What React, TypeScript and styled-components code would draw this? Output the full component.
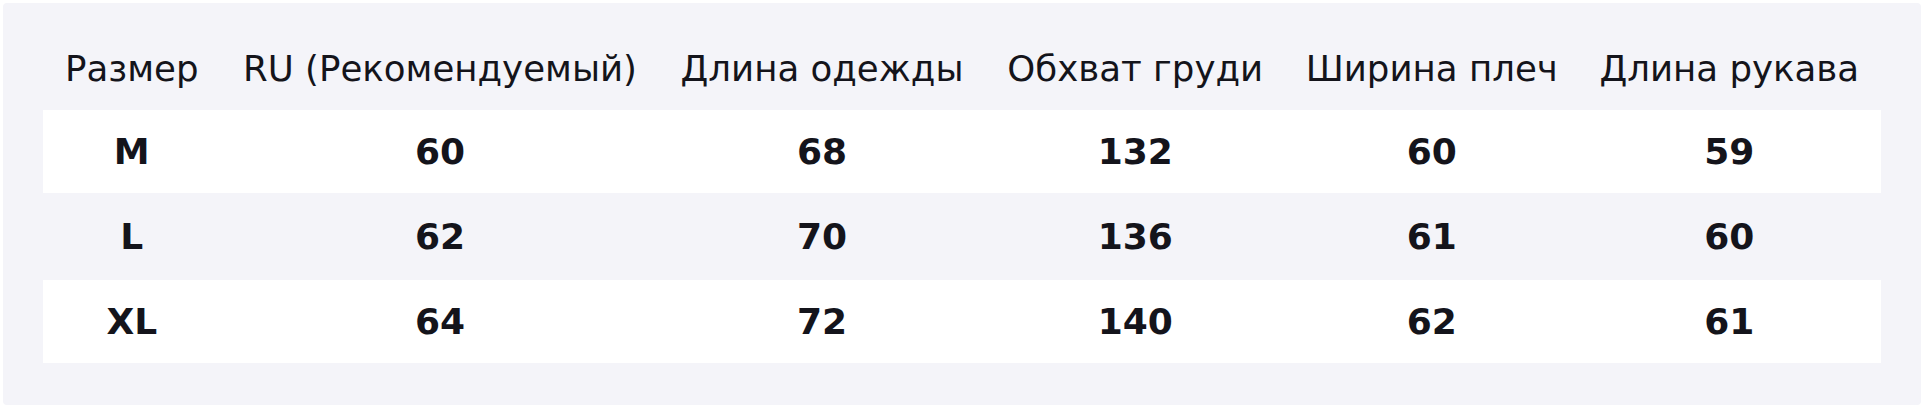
import React from 'react';
import styled, { createGlobalStyle } from 'styled-components';

const GlobalStyle = createGlobalStyle`
  html, body {
    margin: 0;
    padding: 0;
    background: #ffffff;
  }
  body {
    font-family: 'DejaVu Sans', 'Noto Sans', sans-serif;
    color: #14141b;
  }
`;

const Panel = styled.section`
  margin: 3px;
  padding: 24px 40px 42px;
  background: #f4f4f9;
  border-radius: 4px;
`;

const Table = styled.table`
  width: 100%;
  table-layout: fixed;
  border-collapse: collapse;
  border-spacing: 0;
`;

const HeadCell = styled.th`
  padding: 20px 0;
  font-size: 35.6px;
  line-height: 43px;
  font-weight: 400;
  text-align: center;
  white-space: nowrap;
  color: #14141b;
`;

const Row = styled.tr<{ $striped?: boolean }>`
  background: ${({ $striped }) => ($striped ? '#f4f4f9' : '#ffffff')};

  td {
    padding: ${({ $striped }) => ($striped ? '22px 0' : '20px 0')};
  }
`;

const Cell = styled.td`
  font-size: 36px;
  line-height: 43px;
  font-weight: 700;
  text-align: center;
  color: #14141b;
`;

const columns = [
  { label: 'Размер', width: 177.5 },
  { label: 'RU (Рекомендуемый)', width: 439 },
  { label: 'Длина одежды', width: 325 },
  { label: 'Обхват груди', width: 301.5 },
  { label: 'Ширина плеч', width: 291.5 },
  { label: 'Длина рукава', width: 303.5 },
];

const rows = [
  ['M', '60', '68', '132', '60', '59'],
  ['L', '62', '70', '136', '61', '60'],
  ['XL', '64', '72', '140', '62', '61'],
];

export default function App() {
  return (
    <>
      <GlobalStyle />
      <Panel>
        <Table>
          <colgroup>
            {columns.map((c) => (
              <col key={c.label} style={{ width: `${(c.width / 1838) * 100}%` }} />
            ))}
          </colgroup>
          <thead>
            <tr>
              {columns.map((c) => (
                <HeadCell key={c.label}>{c.label}</HeadCell>
              ))}
            </tr>
          </thead>
          <tbody>
            {rows.map((r, i) => (
              <Row key={r[0]} $striped={i % 2 === 1}>
                {r.map((v, j) => (
                  <Cell key={j}>{v}</Cell>
                ))}
              </Row>
            ))}
          </tbody>
        </Table>
      </Panel>
    </>
  );
}
